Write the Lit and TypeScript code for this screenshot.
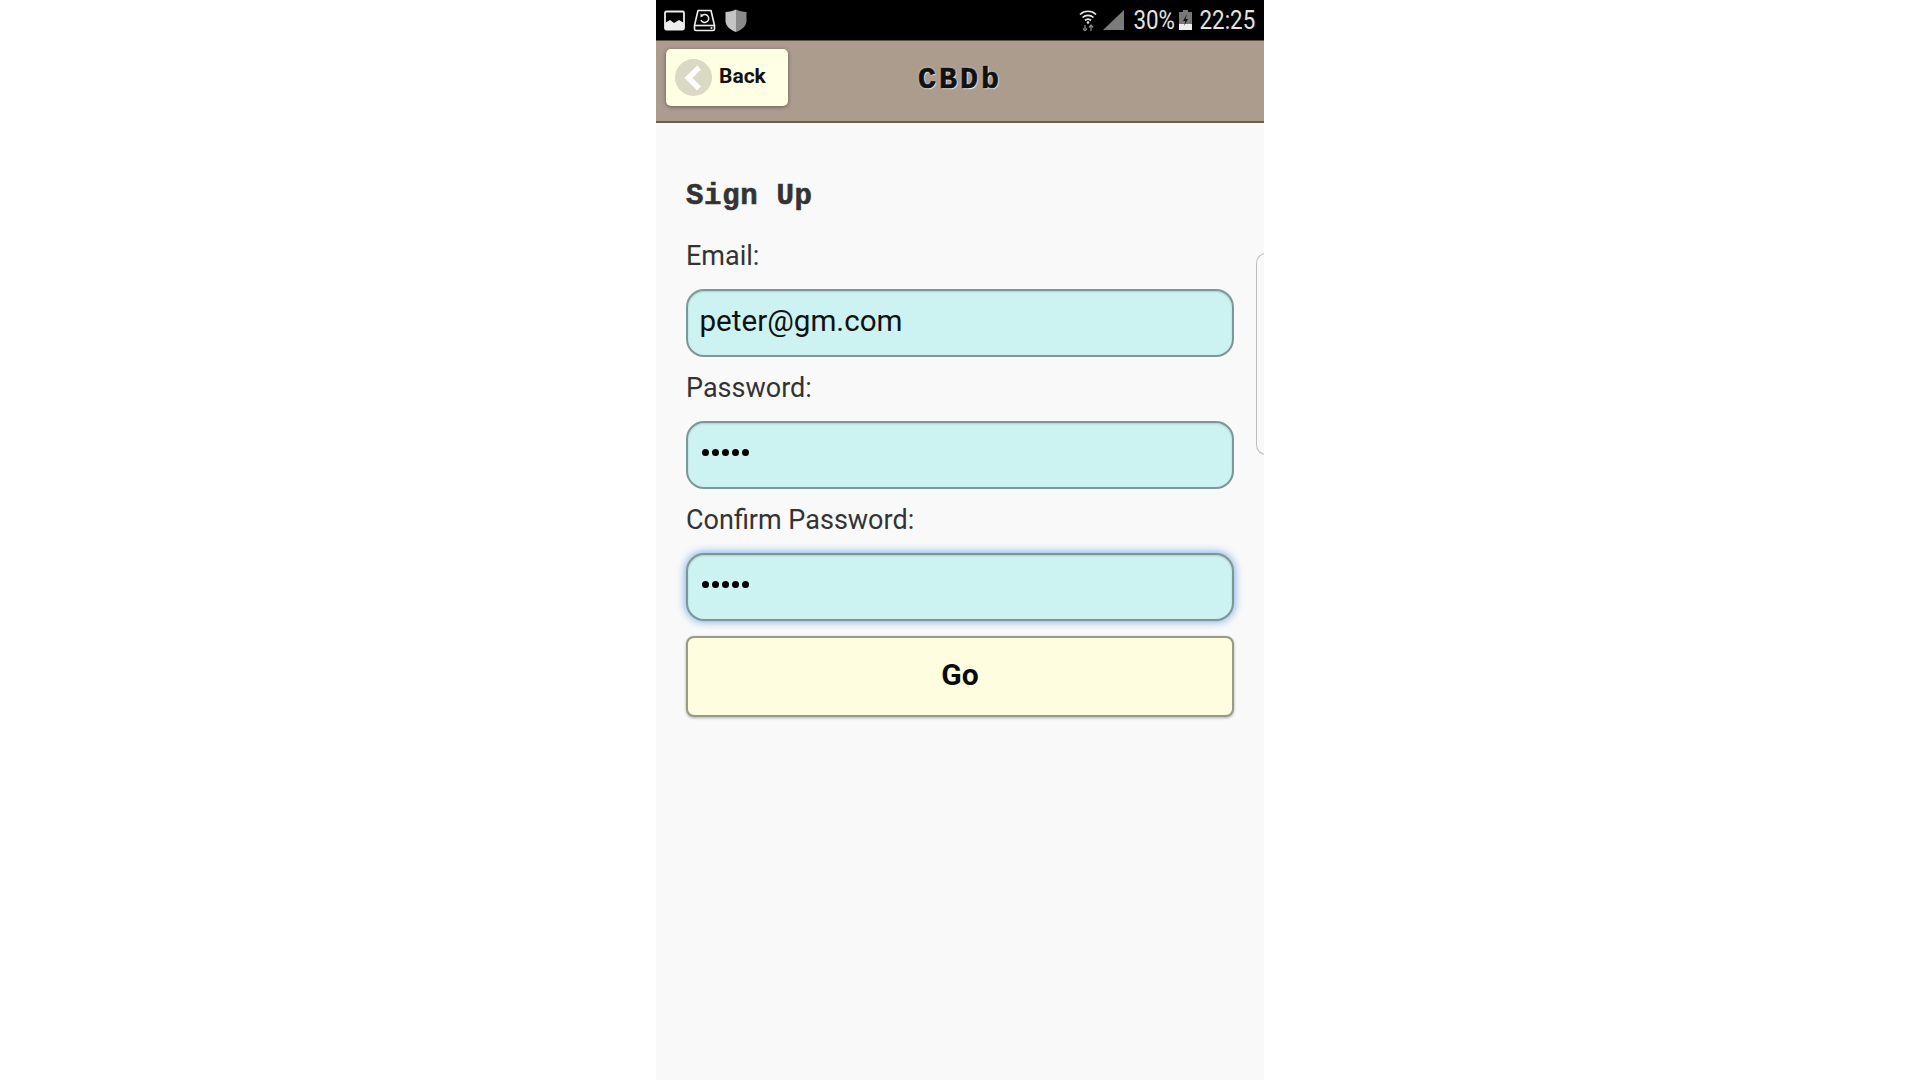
import {html, css, LitElement} from 'lit';
import {customElement} from 'lit/decorators.js';

@customElement('app-root')
export class AppRoot extends LitElement {
  static styles = css`
    :host {
      display: flex;
      justify-content: center;
      height: 1080px;
      background: #fff;
      font-family: Roboto, sans-serif;
      overflow: hidden;
    }

    .phone {
      position: relative;
      width: 608px;
      height: 1080px;
      background: #f9f9f9;
      overflow: hidden;
    }

    /* status bar */
    .status {
      height: 40px;
      background: #000;
      display: flex;
      align-items: center;
      justify-content: space-between;
      padding: 0 8px 0 8px;
      box-sizing: border-box;
    }

    .status-left, .status-right {
      display: flex;
      align-items: center;
    }

    .status-left { gap: 8px; }

    .status-text {
      color: #e4e4e4;
      font-size: 26px;
      line-height: 40px;
      transform: scaleX(.86);
    }

    .wifi { margin-right: 6px; }
    .pct { margin: 0 1px 0 6px; }
    .clock { margin: 0 -4px 0 3px; }

    /* header */
    .header {
      height: 83px;
      background: #ab9c8e;
      border-top: 1px solid #5c5248;
      border-bottom: 2px solid #6a5f54;
      box-sizing: border-box;
      display: grid;
      grid-template-columns: 1fr auto 1fr;
      align-items: center;
    }

    .back {
      width: 122px;
      height: 57px;
      margin: -7px 0 0 10px;
      box-sizing: border-box;
      background: #ffffe3;
      border-radius: 5px;
      box-shadow: 0 1px 4px rgba(0,0,0,.4);
      display: flex;
      align-items: center;
      gap: 8px;
      padding-left: 9px;
      font-size: 21px;
      font-weight: 700;
      color: #111;
    }

    .back-icon {
      width: 37px;
      height: 37px;
      border-radius: 50%;
      background: #d9d9c4;
      display: flex;
      align-items: center;
      justify-content: center;
      flex: none;
    }

    .back-label { margin: -4px 0 0 -1px; }

    .title {
      margin-top: -2px;
      font-family: "Liberation Mono", monospace;
      font-weight: 700;
      font-size: 30px;
      letter-spacing: 3px;
      color: #111;
      -webkit-text-stroke: .7px #111;
      text-shadow: 0 0 2px #fff, 1px 1px 1px #eee;
    }

    /* form */
    .form {
      padding: 60px 30px 0;
    }

    h1 {
      margin: 0 0 31px;
      font-family: "Liberation Mono", monospace;
      font-weight: 700;
      font-size: 29px;
      line-height: 27px;
      letter-spacing: .7px;
      color: #333;
      -webkit-text-stroke: .6px #333;
    }

    .label {
      font-size: 27px;
      line-height: 31px;
      color: #333;
      margin-bottom: 17px;
    }

    .input {
      height: 68px;
      box-sizing: border-box;
      margin-bottom: 16px;
      background: #ccf3f2;
      border: 2px solid #7f9697;
      border-radius: 18px;
      box-shadow: inset 0 1px 2px rgba(0,0,0,.15);
      padding: 0 0 4px 11.5px;
      display: flex;
      align-items: center;
      color: #111;
      font-size: 29.6px;
    }

    .input.focus {
      box-shadow: 0 0 10px #5f9fe6, inset 0 1px 2px rgba(0,0,0,.15);
    }

    .dots {
      display: flex;
      gap: 3px;
      margin-left: 2px;
      margin-top: -2px;
    }

    .dot {
      width: 7px;
      height: 7px;
      border-radius: 50%;
      background: #000;
    }

    .go {
      height: 81px;
      margin-top: -1px;
      box-sizing: border-box;
      background: #fffde0;
      border: 2px solid #9a9a8a;
      border-radius: 8px;
      box-shadow: 0 1px 3px rgba(0,0,0,.3);
      padding-bottom: 4px;
      display: flex;
      align-items: center;
      justify-content: center;
      font-size: 30px;
      font-weight: 700;
      color: #0a0a0a;
    }

    /* edge panel handle */
    .handle {
      position: absolute;
      right: -2px;
      top: 253px;
      width: 8px;
      height: 200px;
      border: 1px solid #bdbdbd;
      border-radius: 10px 0 0 10px;
    }
  `;

  private dots() {
    return html`<div class="dots">${[0, 1, 2, 3, 4].map(() => html`<span class="dot"></span>`)}</div>`;
  }

  render() {
    return html`
      <div class="phone">
        <div class="status">
          <div class="status-left">
            <svg width="21" height="21" viewBox="0 0 21 21">
              <rect x="1" y="1.5" width="19" height="18" rx="1.5" fill="none" stroke="#eee" stroke-width="1.8"/>
              <path d="M1 19.5V13l5-3 4 3 5-3 5 3v6.500z" fill="#eee"/>
            </svg>
            <svg width="23" height="23" viewBox="0 0 23 23">
              <path d="M5 1.5h13l3.500 15v3.500a1.500 1.500 0 0 1-1.500 1.500H3A1.500 1.500 0 0 1 1.500 20v-3.500z" fill="none" stroke="#eee" stroke-width="1.6" stroke-linejoin="round"/>
              <path d="M2 16.500h19" stroke="#eee" stroke-width="1.6"/>
              <path d="M8 11a4 4 0 1 0 1-4.500" fill="none" stroke="#eee" stroke-width="1.5"/>
              <path d="M7.500 4.500l3 2.500-3 1.500z" fill="#eee"/>
              <circle cx="18.500" cy="19" r="1" fill="#eee"/>
            </svg>
            <svg width="22" height="23" viewBox="0 0 22 23" style="margin-left:1px">
              <path d="M11 .500C8 2 4 3 .500 3v9c0 5 5 9 10.500 11z" fill="#c4c4c4"/>
              <path d="M11 .500c3 1.500 7 2.500 10.500 2.500v9c0 5-5 9-10.500 11z" fill="#8a8a8a"/>
            </svg>
          </div>
          <div class="status-right">
            <svg class="wifi" width="18" height="22" viewBox="0 0 18 22">
              <path d="M1 5.500a11.500 11.500 0 0 1 16 0M3.500 8.500a8 8 0 0 1 11 0M6 11.500a4.500 4.500 0 0 1 6 0" fill="none" stroke="#e8e8e8" stroke-width="1.7"/>
              <circle cx="9" cy="13.500" r="1.300" fill="#e8e8e8"/>
              <path d="M6 22v-4M4 18.500l2-2.500 2 2.500" fill="none" stroke="#888" stroke-width="1.300" transform="rotate(180 6 19)"/>
              <path d="M12 22v-5M10 18.500l2-2.500 2 2.500" fill="none" stroke="#888" stroke-width="1.300"/>
            </svg>
            <svg width="21" height="20" viewBox="0 0 21 20"><path d="M0 20L21 0v20z" fill="#7b7b7b"/></svg>
            <span class="status-text pct">30%</span>
            <svg width="13" height="20" viewBox="0 0 13 20">
              <path d="M4 0h5v2h4v18H0V2h4z" fill="#777"/>
              <path d="M0 14h13v6H0z" fill="#eee"/>
              <path d="M8 4L4 11h2.500L5 16l4-7H6.500z" fill="#111"/>
            </svg>
            <span class="status-text clock">22:25</span>
          </div>
        </div>

        <div class="header">
          <div class="back">
            <span class="back-icon">
              <svg width="22" height="28" viewBox="0 0 22 28">
                <path d="M16 3.500L5.500 14 16 24.500" fill="none" stroke="#fff" stroke-width="5.500"/>
              </svg>
            </span>
            <span class="back-label">Back</span>
          </div>
          <div class="title">CBDb</div>
          <div></div>
        </div>

        <div class="form">
          <h1>Sign Up</h1>
          <div class="label">Email:</div>
          <div class="input">peter@gm.com</div>
          <div class="label">Password:</div>
          <div class="input">${this.dots()}</div>
          <div class="label">Confirm Password:</div>
          <div class="input focus">${this.dots()}</div>
          <div class="go">Go</div>
        </div>

        <div class="handle"></div>
      </div>
    `;
  }
}
